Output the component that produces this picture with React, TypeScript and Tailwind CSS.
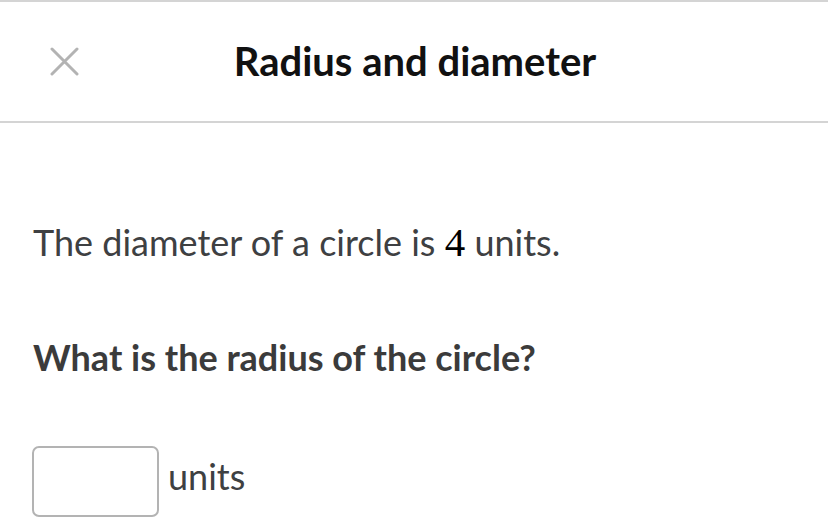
import React from "react";

export default function App() {
  return (
    <div className="w-[828px] h-[522px] bg-white overflow-hidden font-['Lato','Noto_Sans',sans-serif]">
      <div className="h-[123px] border-t-2 border-b-2 border-[#d4d4d4] grid grid-cols-[1fr_auto_1fr] items-center">
        <div className="pl-[50px] flex items-center">
          <svg width="29" height="29" viewBox="0 0 29 29">
            <path
              d="M2 2 L27 27 M27 2 L2 27"
              stroke="#b3b3b3"
              strokeWidth="3"
              strokeLinecap="round"
            />
          </svg>
        </div>
        <div className="text-[40px] font-bold text-[#111111] leading-none pb-[1px] pl-[2px]">
          Radius and diameter
        </div>
        <div />
      </div>
      <div className="pl-[33px] pt-[99px]">
        <div className="text-[36px] leading-[40px] text-[#3e4042] h-[40px] whitespace-nowrap">
          The diameter of a circle is{" "}
          <span className="inline-block [font-family:'Liberation_Serif','Times_New_Roman',serif] text-[41px] leading-[40px] text-black">
            4
          </span>{" "}
          units.
        </div>
        <div className="mt-[75px] text-[36px] leading-[40px] font-bold text-[#3b3b3b] h-[40px] whitespace-nowrap">
          What is the radius of the circle?
        </div>
        <div className="mt-[69px] flex items-center gap-[9px] -ml-[1px]">
          <div className="w-[127px] h-[71px] border-2 border-[#b3b3b3] rounded-[7px]" />
          <span className="text-[36px] text-[#3e4042] leading-none pb-[12px]">units</span>
        </div>
      </div>
    </div>
  );
}
